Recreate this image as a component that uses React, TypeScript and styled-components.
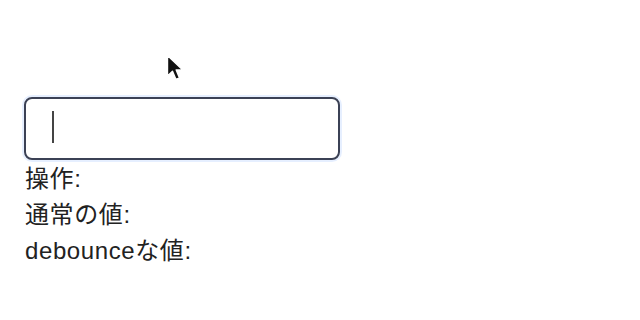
import styled, { createGlobalStyle } from 'styled-components'

const GlobalStyle = createGlobalStyle`
  html, body {
    margin: 0;
    background: #ffffff;
  }
  body {
    font-family: "Liberation Sans", "Noto Sans CJK JP", sans-serif;
    color: #222222;
  }
`

const Page = styled.div`
  position: relative;
  width: 640px;
  height: 320px;
  padding: 97px 0 0 24px;
  box-sizing: border-box;
`

const Field = styled.div`
  width: 316px;
  height: 63px;
  box-sizing: border-box;
  border: 2px solid #3b4155;
  border-radius: 8px;
  box-shadow: 0 0 0 2px rgba(140, 180, 255, 0.22);
  display: flex;
  align-items: center;
  padding-left: 26px;
`

const Caret = styled.span`
  display: block;
  width: 1.5px;
  height: 32px;
  margin-top: -4px;
  background: #444444;
`

const Output = styled.div`
  font-size: 24px;
  line-height: 36px;
  letter-spacing: 0.6px;
  margin-top: 1px;
  padding-left: 1px;
`

const Line = styled.div``

const Pointer = styled.svg`
  position: absolute;
  left: 166px;
  top: 54px;
`

const App = () => {
  return (
    <Page>
      <GlobalStyle />
      <Pointer width="20" height="28" viewBox="0 0 20 28">
        <path
          d="M1.5 1.5 L1.5 22 L6.5 17.2 L10 25.5 L13.5 24 L10.2 16 L16.8 16 Z"
          fill="#111111"
          stroke="#ffffff"
          strokeWidth="1.4"
          strokeLinejoin="round"
        />
      </Pointer>
      <Field>
        <Caret />
      </Field>
      <Output>
        <Line>操作:</Line>
        <Line>通常の値:</Line>
        <Line>debounceな値:</Line>
      </Output>
    </Page>
  )
}

export default App
